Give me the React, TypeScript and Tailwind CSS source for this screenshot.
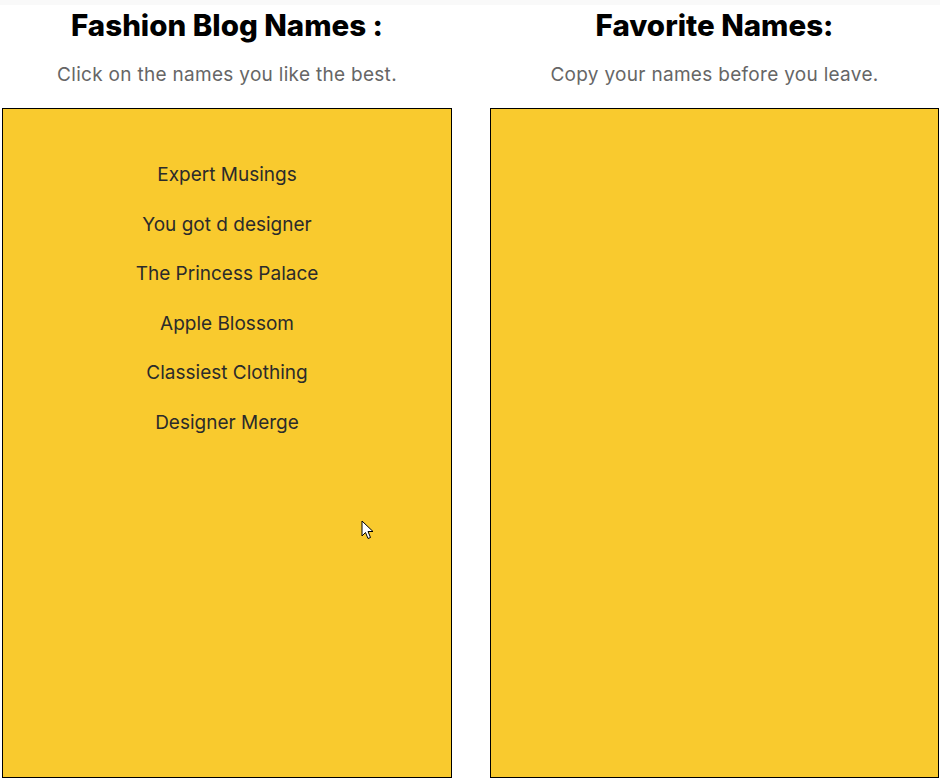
import React, { useState } from 'react';

const NAMES = [
  'Expert Musings',
  'You got d designer',
  'The Princess Palace',
  'Apple Blossom',
  'Classiest Clothing',
  'Designer Merge',
];

const Cursor = () => (
  <svg className="absolute left-[361px] top-[520px]" width="14" height="21" viewBox="0 0 14 21">
    <path
      d="M1 1 L1 16 L4.5 12.5 L7 18.5 L9.5 17.5 L7 11.5 L12 11.5 Z"
      fill="#fff"
      stroke="#000"
      strokeWidth="1"
      strokeLinejoin="round"
    />
  </svg>
);

export default function App() {
  const [favorites, setFavorites] = useState<string[]>([]);

  return (
    <div className="relative w-[940px] h-[780px] bg-white overflow-hidden" style={{ fontFamily: 'Inter, "Open Sans", sans-serif' }}>
      <div className="absolute inset-x-0 top-0 h-[5px] bg-[#f9f9f9]" />
      <div className="flex gap-[38px] pl-[2px]">
        {/* Names column */}
        <div className="w-[450px] flex flex-col">
          <h1 className="pt-[7px] text-center text-[29.5px] leading-[36px] font-extrabold text-black">
            Fashion Blog Names :
          </h1>
          <p className="mt-[18px] text-center text-[19px] leading-[28px] text-[#666] tracking-[0.3px]">
            Click on the names you like the best.
          </p>
          <div className="mt-[19px] h-[670px] border border-black bg-[#f9ca2e] pt-[41px]">
            {NAMES.map((n) => (
              <div
                key={n}
                onClick={() => setFavorites((f) => (f.includes(n) ? f : [...f, n]))}
                className="text-center text-[19px] leading-[49.6px] text-[#2b2b2b] cursor-pointer"
              >
                {n}
              </div>
            ))}
          </div>
        </div>

        {/* Favorites column */}
        <div className="w-[449px] flex flex-col">
          <h1 className="pt-[7px] text-center text-[29.5px] leading-[36px] font-extrabold text-black">
            Favorite Names:
          </h1>
          <p className="mt-[18px] text-center text-[19px] leading-[28px] text-[#666] tracking-[0.3px]">
            Copy your names before you leave.
          </p>
          <div className="mt-[19px] h-[670px] border border-black bg-[#f9ca2e] pt-[41px]">
            {favorites.map((n) => (
              <div key={n} className="text-center text-[19px] leading-[49.6px] text-[#2b2b2b]">
                {n}
              </div>
            ))}
          </div>
        </div>
      </div>
      <Cursor />
    </div>
  );
}
